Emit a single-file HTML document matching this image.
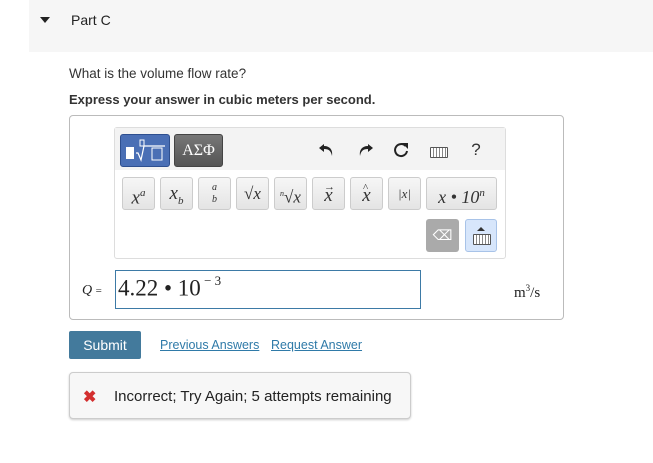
<!DOCTYPE html><html><head><style>
body{margin:0;width:653px;height:463px;background:#fff;font-family:"Liberation Sans",sans-serif;position:relative;overflow:hidden;color:#222}
.a{position:absolute}
.hdr{left:29px;top:0;width:624px;height:52px;background:#f6f6f6}
.btn{position:absolute;top:177px;width:33px;height:33px;box-sizing:border-box;border:1px solid #ccc;border-radius:3px;background:linear-gradient(#f6f6f6,#e4e4e4);font-family:"Liberation Serif",serif;font-style:italic;font-size:19px;text-align:center;line-height:31px;color:#333}
.btn sup,.btn sub{font-size:11px}
.ic{position:absolute;top:140px;font-size:17px;color:#333;text-align:center;width:20px}
.kb{position:absolute;width:16px;height:9px;border:1px solid #555;border-radius:1px;background:repeating-linear-gradient(90deg,#fff 0 2px,#888 2px 3px)}
</style></head><body>
<div class="a hdr"></div>
<div class="a" style="left:40px;top:17px;width:0;height:0;border-left:5px solid transparent;border-right:5px solid transparent;border-top:6px solid #222"></div>
<div class="a" style="left:71px;top:12px;font-size:14px">Part C</div>
<div class="a" style="left:69px;top:66px;font-size:13.5px;color:#333">What is the volume flow rate?</div>
<div class="a" style="left:69px;top:92px;font-size:13px;font-weight:bold;color:#333">Express your answer in cubic meters per second.</div>
<div class="a" style="left:69px;top:115px;width:495px;height:205px;box-sizing:border-box;border:1px solid #bbb;border-radius:4px"></div>
<div class="a" style="left:114px;top:127px;width:392px;height:132px;box-sizing:border-box;border:1px solid #ddd;border-radius:3px;background:#fff"></div>
<div class="a" style="left:115px;top:128px;width:390px;height:42px;background:#f3f3f3"></div>
<div class="a" style="left:120px;top:134px;width:50px;height:33px;background:#4a6fb5;border-radius:3px;border:1px solid #2e4f8f;box-sizing:border-box">
<svg class="a" style="left:0;top:0" width="48" height="31" viewBox="0 0 48 31"><rect x="5" y="12" width="8" height="12" fill="#fff"/><rect x="19" y="5" width="4" height="6" fill="none" stroke="#fff"/><path d="M15 18l2 0 3 7 3-14h21" fill="none" stroke="#fff" stroke-width="1.2"/><rect x="31" y="13" width="10" height="12" fill="none" stroke="#fff"/></svg></div>
<div class="a" style="left:174px;top:134px;width:49px;height:33px;background:linear-gradient(#777,#555);border-radius:3px;border:1px solid #444;box-sizing:border-box;color:#fff;font-family:'Liberation Serif',serif;font-size:16px;text-align:center;line-height:31px">ΑΣΦ</div>
<svg class="a" style="left:318px;top:142px" width="18" height="16" viewBox="0 0 18 16"><path d="M6 2L1 6l5 4V7c5 0 7 2 8 7 1-6-2-10-8-10z" fill="#222"/></svg>
<svg class="a" style="left:356px;top:142px" width="18" height="16" viewBox="0 0 18 16"><path d="M12 2l5 4-5 4V7c-5 0-7 2-8 7-1-6 2-10 8-10z" fill="#222"/></svg>
<svg class="a" style="left:392px;top:141px" width="18" height="18" viewBox="0 0 18 18"><path d="M13.5 5A6 6 0 1 0 15 10" fill="none" stroke="#222" stroke-width="2"/><path d="M10 2h6v6z" fill="#222"/></svg>
<div class="kb" style="left:430px;top:147px"></div>
<div class="ic" style="left:466px;font-family:'Liberation Sans'">?</div>
<div class="btn" style="left:122px">x<sup>a</sup></div>
<div class="btn" style="left:160px">x<sub>b</sub></div>
<div class="btn" style="left:198px;font-size:10px;line-height:12px;padding-top:4px">a<br>b</div>
<div class="btn" style="left:236px;font-size:17px"><span style="font-style:normal">√</span>x</div>
<div class="btn" style="left:274px;font-size:17px"><sup style="font-size:8px">n</sup><span style="font-style:normal">√</span>x</div>
<div class="btn" style="left:312px;line-height:36px">x<span class="a" style="left:11px;top:-9px;font-size:11px;font-style:normal">→</span></div>
<div class="btn" style="left:350px;line-height:36px">x<span class="a" style="left:12px;top:-8px;font-size:11px;font-style:normal">^</span></div>
<div class="btn" style="left:388px;font-size:13px">|x|</div>
<div class="btn" style="left:426px;width:71px;font-size:18px">x • 10<sup>n</sup></div>
<div class="a" style="left:426px;top:219px;width:33px;height:33px;background:#aaa;border-radius:3px;color:#fff;text-align:center;line-height:33px;font-size:14px">⌫</div>
<div class="a" style="left:465px;top:219px;width:32px;height:33px;background:#d7e6fb;border:1px solid #a8c3e8;box-sizing:border-box;border-radius:3px">
<div class="a" style="left:11px;top:7px;border-left:4px solid transparent;border-right:4px solid transparent;border-bottom:4px solid #333"></div>
<div class="kb" style="left:7px;top:14px"></div></div>
<div class="a" style="left:82px;top:283px;font-family:'Liberation Serif',serif;font-style:italic;font-size:14px">Q <span style="font-style:normal;font-size:11px">=</span></div>
<div class="a" style="left:115px;top:270px;width:306px;height:39px;box-sizing:border-box;border:1px solid #3d7aa6"></div>
<div class="a" style="left:118px;top:275px;font-family:'Liberation Serif',serif;font-size:23px">4.22 • 10<sup style="font-size:13px;position:relative;top:-2px"> − 3</sup></div>
<div class="a" style="left:514px;top:283px;font-family:'Liberation Serif',serif;font-size:15px">m<sup style="font-size:9px">3</sup>/s</div>
<div class="a" style="left:69px;top:331px;width:72px;height:28px;background:#437a9c;border-radius:2px;color:#fff;font-size:14px;text-align:center;line-height:28px">Submit</div>
<div class="a" style="left:160px;top:338px;font-size:12.5px;color:#2f7aa8;text-decoration:underline">Previous Answers</div>
<div class="a" style="left:271px;top:338px;font-size:12.5px;color:#2f7aa8;text-decoration:underline">Request Answer</div>
<div class="a" style="left:69px;top:372px;width:342px;height:47px;box-sizing:border-box;border:1px solid #ccc;border-radius:4px;background:#f7f7f7;box-shadow:0 1px 2px #ccc"></div>
<div class="a" style="left:83px;top:387px;color:#d32f2f;font-size:16px;font-weight:bold">✖</div>
<div class="a" style="left:114px;top:388px;font-size:15px;color:#222">Incorrect; Try Again; 5 attempts remaining</div>
</body></html>
